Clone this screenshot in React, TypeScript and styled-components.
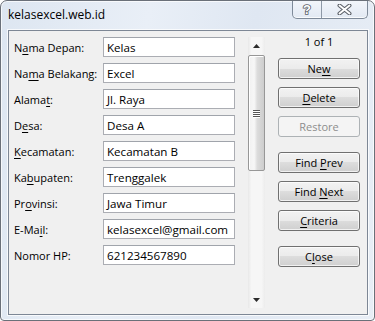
import styled, { createGlobalStyle } from 'styled-components';

const GlobalStyle = createGlobalStyle`
  html, body { margin: 0; padding: 0; background: #ffffff; }
  body { font-family: "Open Sans", "Noto Sans", sans-serif; }
  * { box-sizing: border-box; }
`;

const fields = [
  { label: ['N', 'a', 'ma Depan:'], value: 'Kelas' },
  { label: ['Na', 'm', 'a Belakang:'], value: 'Excel' },
  { label: ['Alama', 't', ':'], value: 'Jl. Raya' },
  { label: ['D', 'e', 'sa:'], value: 'Desa A' },
  { label: ['', 'K', 'ecamatan:'], value: 'Kecamatan B' },
  { label: ['Ka', 'b', 'upaten:'], value: 'Trenggalek' },
  { label: ['Pr', 'o', 'vinsi:'], value: 'Jawa Timur' },
  { label: ['E-Ma', 'i', 'l:'], value: 'kelasexcel@gmail.com' },
  { label: ['Nomor HP:', '', ''], value: '621234567890' },
];

const buttons = [
  { text: ['Ne', 'w', ''] },
  { text: ['', 'D', 'elete'] },
  { text: ['Restore', '', ''], disabled: true },
  { text: ['Find ', 'P', 'rev'], spaced: true },
  { text: ['Find ', 'N', 'ext'] },
  { text: ['', 'C', 'riteria'] },
  { text: ['C', 'l', 'ose'], spaced: true },
];

export default function App() {
  return (
    <>
      <GlobalStyle />
      <Window>
        <TitleBar>
          <Title>kelasexcel.web.id</Title>
          <Caption>
            <HelpBtn>
              <svg width="12" height="14" viewBox="0 0 12 14">
                <text
                  x="6"
                  y="12"
                  textAnchor="middle"
                  fontSize="13"
                  fontWeight="bold"
                  fontFamily="Liberation Sans, sans-serif"
                  fill="#ffffff"
                  stroke="#5b6068"
                  strokeWidth="1.6"
                  paintOrder="stroke"
                >
                  ?
                </text>
              </svg>
            </HelpBtn>
            <CloseBtn>
              <svg width="15" height="11" viewBox="0 0 15 11">
                <path d="M2.5 1.5 L12.5 9.5 M12.5 1.5 L2.5 9.5" stroke="#5b6068" strokeWidth="4" strokeLinecap="round" />
                <path d="M2.5 1.5 L12.5 9.5 M12.5 1.5 L2.5 9.5" stroke="#ffffff" strokeWidth="2" strokeLinecap="round" />
              </svg>
            </CloseBtn>
          </Caption>
        </TitleBar>

        <Client>
          <Form>
            {fields.map((f) => (
              <Row key={f.value}>
                <Label>
                  {f.label[0]}
                  {f.label[1] && <Key>{f.label[1]}</Key>}
                  {f.label[2]}
                </Label>
                <Field>{f.value}</Field>
              </Row>
            ))}
          </Form>

          <ScrollBar>
            <Arrow>
              <svg width="7" height="4" viewBox="0 0 7 4">
                <path d="M0 4 L3.5 0 L7 4 Z" fill="#2b2b2b" />
              </svg>
            </Arrow>
            <Track>
              <Thumb>
                <Grip />
                <Grip />
                <Grip />
                <Grip />
              </Thumb>
            </Track>
            <Arrow>
              <svg width="7" height="4" viewBox="0 0 7 4">
                <path d="M0 0 L7 0 L3.5 4 Z" fill="#2b2b2b" />
              </svg>
            </Arrow>
          </ScrollBar>

          <Actions>
            <Counter>1 of 1</Counter>
            {buttons.map((b) => (
              <Button key={b.text.join('')} disabled={b.disabled} $spaced={b.spaced}>
                {b.text[0]}
                {b.text[1] && <Key>{b.text[1]}</Key>}
                {b.text[2]}
              </Button>
            ))}
          </Actions>
        </Client>
      </Window>
    </>
  );
}

const Window = styled.div`
  width: 375px;
  height: 321px;
  border: 1px solid #6a7079;
  border-radius: 7px 7px 4px 4px;
  background: linear-gradient(100deg, #dde6f1 0%, #e9eff7 35%, #dfe7f2 60%, #e8eef6 100%);
  box-shadow: inset 0 0 0 1px rgba(255, 255, 255, 0.7);
  display: flex;
  flex-direction: column;
  overflow: hidden;
`;

const TitleBar = styled.div`
  height: 29px;
  display: flex;
  align-items: flex-start;
  padding-left: 7px;
  padding-right: 6px;
`;

const Title = styled.div`
  margin-top: 6px;
  font-size: 12px;
  line-height: 16px;
  color: #000000;
`;

const Caption = styled.div`
  margin-left: auto;
  margin-top: -1px;
  display: flex;
  height: 19px;
  border: 1px solid #7e8a99;
  border-top: none;
  border-radius: 0 0 5px 5px;
  background: linear-gradient(#f3f6fb, #e2e9f3);
  box-shadow: inset 0 -1px 0 rgba(255, 255, 255, 0.8);
  overflow: hidden;
`;

const HelpBtn = styled.div`
  width: 29px;
  display: flex;
  align-items: center;
  justify-content: center;
  border-right: 1px solid #8e99a7;
`;

const CloseBtn = styled.div`
  width: 45px;
  display: flex;
  align-items: center;
  justify-content: center;
`;

const Client = styled.div`
  flex: 1;
  margin: 0 6px 5px 7px;
  border: 1px solid #7d8795;
  box-shadow: 0 0 0 1px rgba(255, 255, 255, 0.75);
  background: #f0f0f0;
  display: flex;
  padding: 6px 7px 0 5px;
  font-size: 11px;
  color: #000000;
`;

const Form = styled.div`
  display: grid;
  grid-template-columns: 89px 132px;
  grid-auto-rows: 20px;
  row-gap: 6px;
  align-content: start;
`;

const Row = styled.div`
  display: contents;
`;

const Label = styled.div`
  display: flex;
  align-items: center;
  white-space: pre;
`;

const Key = styled.u`
  text-decoration: underline;
  text-underline-offset: 2px;
`;

const Field = styled.div`
  border: 1px solid #abadb3;
  border-top-color: #a0a4ab;
  background: #ffffff;
  display: flex;
  align-items: center;
  padding-left: 3px;
  font-size: 11.6px;
  white-space: nowrap;
  overflow: hidden;
`;

const ScrollBar = styled.div`
  margin-left: 13px;
  width: 17px;
  height: 271px;
  display: flex;
  flex-direction: column;
  background: linear-gradient(90deg, #e8e8e8, #f6f6f6 20%, #f6f6f6 80%, #ececec);
`;

const Arrow = styled.div`
  height: 17px;
  display: flex;
  align-items: center;
  justify-content: center;
`;

const Track = styled.div`
  flex: 1;
  padding-top: 1px;
`;

const Thumb = styled.div`
  height: 116px;
  border: 1px solid #979797;
  border-radius: 2px;
  background: linear-gradient(90deg, #f1f1f1 0%, #f7f7f7 35%, #dcdcdc 55%, #cdcdcd 100%);
  box-shadow: inset 1px 1px 0 #ffffff;
  display: flex;
  flex-direction: column;
  align-items: center;
  justify-content: center;
  gap: 1px;
`;

const Grip = styled.div`
  width: 7px;
  height: 1px;
  background: #555555;
  box-shadow: 0 1px 0 #ffffff;
`;

const Actions = styled.div`
  margin-left: 13px;
  width: 82px;
  display: flex;
  flex-direction: column;
  gap: 8px;
`;

const Counter = styled.div`
  height: 14px;
  margin-top: -2px;
  text-align: center;
  font-size: 11px;
  line-height: 14px;
  margin-bottom: 1px;
`;

const Button = styled.button<{ $spaced?: boolean }>`
  height: 21px;
  margin-top: ${(p) => (p.$spaced ? '7px' : '0')};
  padding: 0;
  font-family: inherit;
  font-size: 11px;
  color: #000000;
  border: 1px solid #707070;
  border-radius: 3px;
  background: linear-gradient(#f2f2f2 0%, #ebebeb 50%, #dddddd 50%, #cfcfcf 100%);
  box-shadow: inset 0 0 0 1px rgba(255, 255, 255, 0.7);
  &:disabled {
    color: #8d8d8d;
    border-color: #adb2b5;
    background: #f4f4f4;
    box-shadow: none;
  }
`;
